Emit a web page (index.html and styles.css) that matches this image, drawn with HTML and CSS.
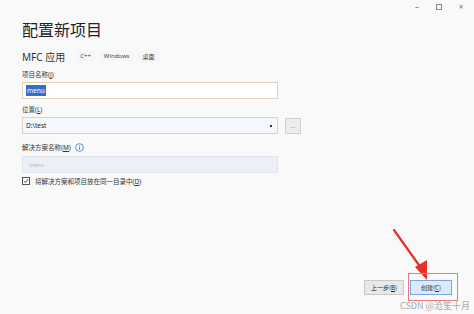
FILE: index.html
```html
<!DOCTYPE html>
<html lang="zh-CN">
<head>
  <meta charset="UTF-8" />
  <title>配置新项目</title>
  <link rel="stylesheet" href="styles.css">
</head>
<body>
  <div class="titlebar">
    <span class="win-btn">&#8211;</span>
    <span class="win-btn max"></span>
    <span class="win-btn">&#215;</span>
  </div>

  <div class="content">
    <h1>配置新项目</h1>

    <div class="subtitle">
      <span class="app-name">MFC 应用</span>
      <span class="tag">C++</span>
      <span class="tag">Windows</span>
      <span class="tag">桌面</span>
    </div>

    <div class="field">
      <div class="label"><span>项目名称(<u>J</u>)</span></div>
      <div class="input focused"><span class="selected">menu</span></div>
    </div>

    <div class="field location">
      <div class="label"><span>位置(<u>L</u>)</span></div>
      <div class="row">
        <div class="input select">
          <span>D:\test</span>
          <span class="caret"></span>
        </div>
        <div class="browse">...</div>
      </div>
    </div>

    <div class="field solution">
      <div class="label">
        <span>解决方案名称(<u>M</u>)</span>
        <svg class="info" width="9" height="9" viewBox="0 0 10 10">
          <circle cx="5" cy="5" r="4.3" fill="none" stroke="#3b7bd6" stroke-width="0.9"/>
          <rect x="4.5" y="4.2" width="1" height="3.2" fill="#3b7bd6"/>
          <rect x="4.5" y="2.5" width="1" height="1" fill="#3b7bd6"/>
        </svg>
      </div>
      <div class="input disabled">menu</div>
    </div>

    <label class="check-row">
      <span class="checkbox">
        <svg width="8" height="8" viewBox="0 0 8 8">
          <path d="M1.3 4.2 L3.1 6 L6.8 1.8" fill="none" stroke="#222" stroke-width="1.1"/>
        </svg>
      </span>
      <span>将解决方案和项目放在同一目录中(<u>D</u>)</span>
    </label>
  </div>

  <div class="footer">
    <button class="btn">上一步(<u>B</u>)</button>
    <button class="btn primary">创建(<u>C</u>)</button>
  </div>

  <!-- annotation drawn on top of the screenshot -->
  <svg class="arrow" width="50" height="60" viewBox="0 0 50 60">
    <path d="M3 3 L30 41" stroke="#e8302a" stroke-width="2.2" stroke-linecap="round"/>
    <polygon points="24,40 36,33 36,53" fill="#e8302a"/>
  </svg>
  <div class="highlight"></div>
  <div class="watermark">CSDN @沧笙十月</div>
</body>
</html>
```

FILE: styles.css
```css
* {
  box-sizing: border-box;
  margin: 0;
  padding: 0;
}

body {
  font-family: 'Noto Sans', 'Noto Sans CJK SC', sans-serif;
  background-color: #f9f9fa;
  color: #1e1e1e;
  width: 474px;
  height: 314px;
  display: flex;
  flex-direction: column;
  position: relative;
  overflow: hidden;
}

.titlebar {
  display: flex;
  justify-content: flex-end;
  align-items: center;
  gap: 12px;
  height: 13px;
  padding-right: 8px;
}

.win-btn {
  width: 10px;
  text-align: center;
  font-size: 8px;
  line-height: 10px;
  color: #777;
}

.win-btn.max {
  width: 6px;
  height: 6px;
  border: 1px solid #888;
  margin: 0 2px;
}

.content {
  padding: 0 22px;
  display: flex;
  flex-direction: column;
}

h1 {
  font-family: 'Noto Sans CJK SC', sans-serif;
  font-weight: 400;
  font-size: 16px;
  line-height: 20px;
  margin-top: 6px;
  color: #222;
}

.subtitle {
  display: flex;
  align-items: center;
  gap: 5px;
  margin-top: 10px;
  height: 14px;
}

.app-name {
  font-size: 10px;
  margin-right: 6px;
  color: #333;
}

.tag {
  font-size: 6px;
  padding: 1px 4px;
  background-color: #f6f6f7;
  color: #444;
}

.field {
  margin-top: 6px;
}

.field.location {
  margin-top: 5px;
}

.field.solution {
  margin-top: 7px;
}

.label {
  display: flex;
  align-items: center;
  gap: 4px;
  font-size: 6.5px;
  height: 10px;
  color: #333;
  margin-bottom: 3px;
}

.field.solution .label {
  height: 12px;
}

.input {
  width: 256px;
  height: 17px;
  display: flex;
  align-items: center;
  padding-left: 3px;
  font-size: 6.5px;
  background-color: #fff;
  border: 1px solid #cfd3dc;
}

.input.focused {
  border-color: #e2d3b0;
}

.selected {
  background-color: #2f6fd0;
  color: #fff;
  padding: 1px 1px;
}

.input.select {
  background-color: #f4f7fd;
  justify-content: space-between;
  padding-right: 5px;
}

.caret {
  width: 2px;
  height: 2px;
  background-color: #333;
}

.row {
  display: flex;
  align-items: center;
  gap: 7px;
}

.browse {
  width: 16px;
  height: 16px;
  border: 1px solid #cfd1d6;
  background-color: #ececee;
  font-size: 5px;
  color: #666;
  display: flex;
  align-items: center;
  justify-content: center;
}

.input.disabled {
  background-color: #eceff6;
  border-color: #e1e4ec;
  color: #b5b9c4;
  font-size: 5.5px;
  padding-left: 6px;
}

.check-row {
  display: flex;
  align-items: center;
  gap: 5px;
  margin-top: 3px;
  font-size: 6.5px;
  color: #333;
}

.checkbox {
  width: 8px;
  height: 8px;
  border: 1px solid #555;
  background-color: #fff;
  display: flex;
  align-items: center;
  justify-content: center;
}

.footer {
  margin-top: auto;
  display: flex;
  justify-content: flex-end;
  gap: 6px;
  padding: 0 22px 19px 0;
}

.btn {
  width: 40px;
  height: 15px;
  font-family: 'Noto Sans CJK SC', sans-serif;
  font-size: 6px;
  color: #222;
  background-color: #e8e8ea;
  border: 1px solid #c9c9cc;
}

.btn.primary {
  width: 42px;
  background-color: #dce9f8;
  border-color: #7aa6dc;
}

.arrow {
  position: absolute;
  left: 391px;
  top: 227px;
}

.highlight {
  position: absolute;
  left: 408px;
  top: 273px;
  width: 50px;
  height: 28px;
  border: 1px solid #e87a7a;
}

.watermark {
  position: absolute;
  right: 4px;
  bottom: 2px;
  font-family: 'Noto Sans CJK SC', sans-serif;
  font-size: 9px;
  color: #a8a8a8;
}
```
